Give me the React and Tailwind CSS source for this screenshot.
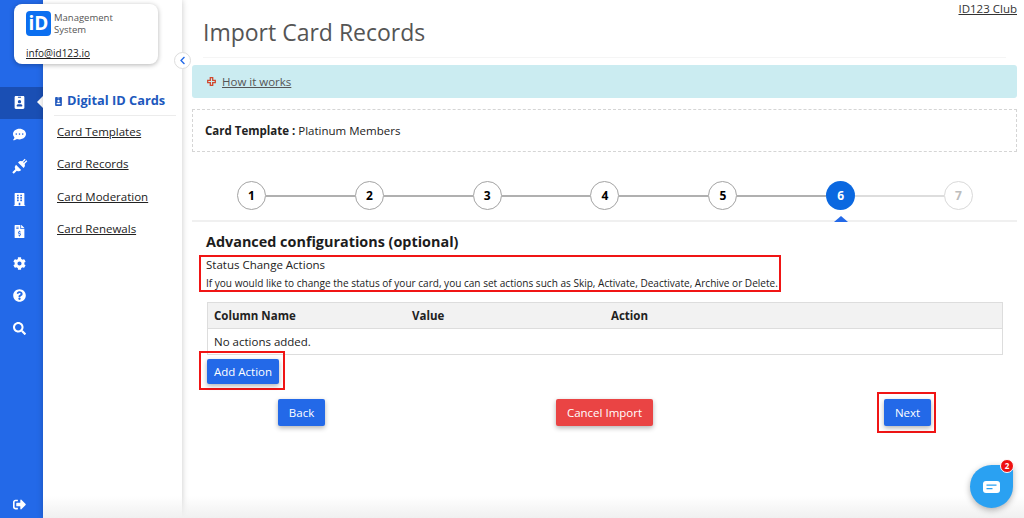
import React from 'react';
import {
  FaIdBadge,
  FaCommentDots,
  FaBuilding,
  FaFileInvoiceDollar,
  FaCog,
  FaQuestionCircle,
  FaSearch,
  FaSignOutAlt,
  FaChevronLeft,
} from 'react-icons/fa';

// two plug halves meeting in the middle, not in the icon packages
const PlugPair = () => (
  <svg width="21" height="21" viewBox="0 0 16 16" fill="white" className="shrink-0">
    <g transform="rotate(45 8 8)">
      <path d="M5 6.6a3 3 0 0 1 6 0z" />
      <path d="M5.2 9h5.6a2.8 2.8 0 0 1-2 2.7V15H7.2v-3.3a2.8 2.8 0 0 1-2-2.7z" />
      <path d="M6.6 4.2V1h1v3.2zM8.4 4.2V1h1v3.2z" />
    </g>
  </svg>
);

const navIcons = [
  { Icon: FaIdBadge, active: true },
  { Icon: FaCommentDots },
  { Icon: PlugPair },
  { Icon: FaBuilding },
  { Icon: FaFileInvoiceDollar },
  { Icon: FaCog },
  { Icon: FaQuestionCircle },
  { Icon: FaSearch },
];

const subLinks = ['Card Templates', 'Card Records', 'Card Moderation', 'Card Renewals'];
const steps = [1, 2, 3, 4, 5, 6, 7];

const Stepper = () => (
  <div className="flex items-center h-[29px] ml-[45px] mr-[44px] mt-[29px]">
    {steps.map((n) => (
      <React.Fragment key={n}>
        {n > 1 && <div className={`flex-1 h-[2px] ${n === 7 ? 'bg-[#dddddd]' : 'bg-[#b0b0b0]'}`} />}
        {n === 6 ? (
          <div className="relative w-[29px] h-[29px] rounded-full bg-[#0b68e0] text-white flex items-center justify-center text-[12px] font-bold">
            {n}
            <span className="absolute left-[8px] top-[35px] w-0 h-0 border-l-[7px] border-r-[7px] border-b-[6px] border-l-transparent border-r-transparent border-b-[#2369e8]" />
          </div>
        ) : (
          <div className={`w-[29px] h-[29px] rounded-full border flex items-center justify-center text-[12px] font-bold ${n === 7 ? 'border-[#d9d9d9] text-[#bdbdbd]' : 'border-[#a3a3a3] text-black'}`}>
            {n}
          </div>
        )}
      </React.Fragment>
    ))}
  </div>
);

const ActionButton = ({ children, color = 'bg-[#2369e8]', className = '' }) => (
  <button className={`h-[27px] rounded-[2px] text-white text-[11.5px] shadow-[0_2px_5px_rgba(0,0,0,0.3)] ${color} ${className}`}>
    {children}
  </button>
);

export default function App() {
  return (
    <div className="relative flex w-[1024px] h-[518px] overflow-hidden bg-white text-[#222222] font-['Open_Sans',sans-serif]">
      {/* Icon rail */}
      <aside className="w-[43px] shrink-0 bg-[#2369e8] flex flex-col items-center pt-[87px] pb-[3px] text-white">
        {navIcons.map(({ Icon, active }, i) => (
          <div key={i} className={`relative w-full h-[32.3px] pr-[5px] pb-[2px] flex items-center justify-center ${active ? 'bg-[#1a4fb4]' : ''}`}>
            <Icon size={13} />
            {active && (
              <span className="absolute right-0 top-[9px] w-0 h-0 border-y-[6px] border-r-[6px] border-y-transparent border-r-white" />
            )}
          </div>
        ))}
        <div className="mt-auto h-[22px] pr-[5px] flex items-center justify-center">
          <FaSignOutAlt size={13} />
        </div>
      </aside>

      {/* Sub menu */}
      <nav className="relative w-[139px] shrink-0 bg-white shadow-[0_0_6px_rgba(0,0,0,0.22)] pt-[93px] pl-[11px] pr-[6px]">
        <div className="flex items-center gap-[4px] h-[16px] text-[#2058bd] font-bold text-[12.8px] whitespace-nowrap">
          <FaIdBadge size={9} />
          <span>Digital ID Cards</span>
        </div>
        <div className="h-px bg-[#ececec] mt-[6px] mb-[7px]" />
        <ul className="pl-[3px] flex flex-col gap-[15.3px] text-[11.5px]">
          {subLinks.map((l) => (
            <li key={l} className="h-[17px] leading-[17px] underline whitespace-nowrap">{l}</li>
          ))}
        </ul>
        <button className="absolute right-[-9px] top-[52px] w-[17px] h-[17px] rounded-full bg-white border border-[#dddddd] flex items-center justify-center text-[#2369e8]">
          <FaChevronLeft size={9} />
        </button>
      </nav>

      {/* Logo card */}
      <div className="absolute left-[14px] top-[4px] w-[144px] h-[60px] bg-white rounded-[8px] shadow-[0_1px_5px_rgba(0,0,0,0.3)] pl-[12px] pt-[7px] z-10">
        <div className="flex items-start gap-[3px]">
          <div className="w-[25px] h-[25px] rounded-[4px] bg-[#0b6ff0] text-white flex items-center justify-center text-[19px] font-bold leading-none">iD</div>
          <div className="pt-[1px] text-[9.5px] leading-[12px] text-[#555555]">Management<br />System</div>
        </div>
        <div className="text-[10px] leading-[14px] underline mt-[10px]">info@id123.io</div>
      </div>

      {/* Main */}
      <main className="flex-1 min-w-0 pl-[10px] pr-[7px]">
        <div className="flex items-start justify-between">
          <div className="ml-[11px] mr-[-48px] flex-1 h-[58px] border-b border-[#f5f5f5]">
            <h1 className="mt-[15px] text-[23px] leading-[34px] text-[#555555]">Import Card Records</h1>
          </div>
          <a className="mt-px text-[11.5px] leading-[16px] underline text-[#333333]">ID123 Club</a>
        </div>

        <div className="mt-[7px] h-[33px] rounded-[3px] bg-[#cbecf1] flex items-center pl-[15px] gap-[6px] text-[11.5px] text-[#555555]">
          <svg width="9" height="9" viewBox="0 0 9 9" fill="none" stroke="#d1492e" strokeWidth="1.3">
            <path d="M3.3 .7h2.4v2.6h2.6v2.4H5.7v2.6H3.3V5.7H.7V3.3h2.6z" />
          </svg>
          <span className="underline">How it works</span>
        </div>

        <div className="mt-[11px] h-[43px] border border-dashed border-[#d5d5d5] flex items-center pl-[12px] text-[11.5px]">
          <b>Card Template :</b>&nbsp;Platinum Members
        </div>

        <Stepper />
        <div className="h-[2px] bg-[#f0f0f0] mt-[10px]" />

        <div className="pl-[14px] mt-[10px] text-[14.4px] leading-[20px] font-bold text-[#1c1c1c]">Advanced configurations (optional)</div>

        <div className="ml-[7px] w-[582px] h-[37px] mt-[3px] border-2 border-[#f01515] pl-[5px] whitespace-nowrap">
          <div className="text-[11.5px] leading-[16px]">Status Change Actions</div>
          <div className="text-[10.05px] leading-[15px] mt-[3px]">If you would like to change the status of your card, you can set actions such as Skip, Activate, Deactivate, Archive or Delete.</div>
        </div>

        <div className="ml-[15px] mr-[14px] mt-[10px] border border-[#dddddd] text-[11.5px]">
          <div className="h-[26px] bg-[#f2f2f2] border-b border-[#dddddd] grid grid-cols-[198px_199px_1fr] items-center pl-[6px] font-bold">
            <span>Column Name</span>
            <span>Value</span>
            <span>Action</span>
          </div>
          <div className="h-[25px] flex items-center pl-[6px]">No actions added.</div>
        </div>

        <div className="relative ml-[7px] mt-[-4px] w-[86px] h-[39px] border-2 border-[#f01515] pl-[6px] pt-[6px] z-10">
          <ActionButton className="w-[72px] !h-[25px] block">Add Action</ActionButton>
        </div>

        <div className="mt-[9px] flex items-start">
          <ActionButton className="w-[47px] ml-[86px]">Back</ActionButton>
          <ActionButton color="bg-[#ea4444]" className="w-[97px] ml-[231px]">Cancel Import</ActionButton>
          <div className="ml-[224px] mt-[-7px] w-[59px] h-[41px] border-2 border-[#f01515] pl-[5px] pt-[5px]">
            <ActionButton className="w-[47px] block">Next</ActionButton>
          </div>
        </div>
      </main>

      {/* Bottom fade */}
      <div className="pointer-events-none absolute left-[43px] right-0 bottom-0 h-[22px] bg-gradient-to-t from-[#f0f0f0] to-transparent" />

      {/* Chat bubble */}
      <div className="absolute left-[970px] top-[465px] w-[43px] h-[43px] rounded-full rounded-tr-[6px] bg-[#2aa1f2] shadow-[0_2px_6px_rgba(0,0,0,0.3)] flex items-center justify-center">
        <svg width="17" height="12" viewBox="0 0 17 12">
          <rect x="0" y="0" width="17" height="12" rx="3" fill="white" />
          <path d="M3.5 4.2h10M3.5 7.6h6" stroke="#2aa1f2" strokeWidth="1.3" />
        </svg>
        <span className="absolute right-[-1px] top-[-6px] w-[14px] h-[14px] rounded-full bg-[#ee1111] border-[1.5px] border-white text-white text-[8px] font-bold flex items-center justify-center leading-none">2</span>
      </div>
    </div>
  );
}
